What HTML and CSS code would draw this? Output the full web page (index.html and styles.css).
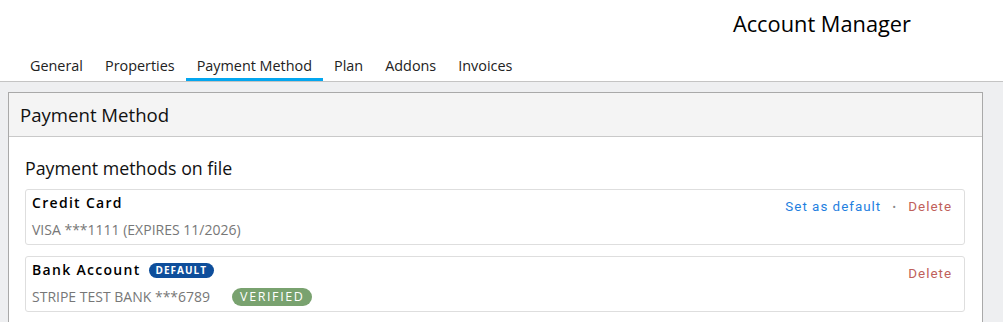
FILE: index.html
```html
<!DOCTYPE html>
<html lang="en">
<head>
    <meta charset="UTF-8">
    <meta name="viewport" content="width=device-width, initial-scale=1.0">
    <title>Account Manager</title>
    <link rel="stylesheet" href="styles.css">
</head>
<body>
    <header class="top">
        <h1>Account Manager</h1>
    </header>
    <nav class="tabs">
        <a href="#">General</a>
        <a href="#">Properties</a>
        <a href="#" class="active">Payment Method</a>
        <a href="#">Plan</a>
        <a href="#">Addons</a>
        <a href="#">Invoices</a>
    </nav>
    <section class="main">
        <div class="panel">
            <div class="panel-head">Payment Method</div>
            <div class="panel-body">
                <h2>Payment methods on file</h2>
                <div class="method">
                    <div class="method-info">
                        <div class="method-title">Credit Card</div>
                        <div class="method-sub">VISA ***1111 (EXPIRES 11/2026)</div>
                    </div>
                    <div class="actions">
                        <a href="#" class="set-default">Set as default</a>
                        <span class="dot">&bull;</span>
                        <a href="#" class="delete">Delete</a>
                    </div>
                </div>
                <div class="method">
                    <div class="method-info">
                        <div class="method-title">Bank Account <span class="badge-default">DEFAULT</span></div>
                        <div class="method-sub">STRIPE TEST BANK ***6789 <span class="badge-verified">VERIFIED</span></div>
                    </div>
                    <div class="actions">
                        <a href="#" class="delete">Delete</a>
                    </div>
                </div>
            </div>
        </div>
    </section>
</body>
</html>
```

FILE: styles.css
```css
body {
    font-family: "Open Sans", "Noto Sans", sans-serif;
    margin: 0;
    padding: 0;
    background-color: #fff;
    color: #111;
    height: 322px;
    overflow: hidden;
}
.top {
    display: flex;
    justify-content: flex-end;
    height: 47px;
    padding-right: 92px;
}
.top h1 {
    margin: 0;
    padding-top: 9px;
    font-size: 21.8px;
    font-weight: 500;
    line-height: 30px;
    color: #000;
}
.tabs {
    display: flex;
    padding-left: 19px;
    border-bottom: 1px solid #c4c4c4;
    height: 34px;
}
.tabs a {
    display: block;
    padding: 0 11px;
    line-height: 37px;
    font-size: 14.4px;
    color: #222;
    text-decoration: none;
    border-bottom: 3px solid transparent;
    box-sizing: border-box;
    height: 34px;
}
.tabs a.active {
    border-bottom-color: #03a6ef;
}
.main {
    background-color: #eeeff1;
    padding: 10px 20px 0 8px;
    height: 240px;
}
.panel {
    border: 1px solid #a9a9a9;
    border-bottom: none;
    background-color: #fff;
    height: 240px;
}
.panel-head {
    background-color: #f4f4f4;
    border-bottom: 1px solid #c9c9c9;
    height: 43px;
    line-height: 43px;
    padding-left: 11px;
    font-size: 18.6px;
    font-weight: 500;
}
.panel-body {
    padding: 19px 17px 0 16px;
}
.panel-body h2 {
    margin: 0 0 9px 0;
    font-size: 17.8px;
    font-weight: 500;
    line-height: 24px;
}
.method {
    display: flex;
    justify-content: space-between;
    border: 1px solid #dedede;
    border-radius: 3px;
    height: 51px;
    padding: 3px 12px 0 6px;
    margin-bottom: 11px;
}
.method-title {
    font-size: 14px;
    font-weight: 600;
    letter-spacing: 1.3px;
    height: 20px;
    line-height: 20px;
    display: flex;
    align-items: center;
    color: #000;
}
.method-sub {
    margin-top: 7px;
    font-size: 14px;
    color: #777;
    line-height: 20px;
    display: flex;
    align-items: center;
}
.badge-default {
    display: inline-block;
    background-color: #0e4e9b;
    color: #fff;
    font-size: 10px;
    font-weight: 700;
    letter-spacing: 1px;
    border-radius: 8px;
    padding: 0 7px;
    line-height: 15px;
    margin-left: 8px;
}
.badge-verified {
    display: inline-block;
    background-color: #79a26f;
    color: #fff;
    font-size: 12.5px;
    letter-spacing: 1.6px;
    border-radius: 9px;
    padding: 0 8px;
    line-height: 18px;
    margin-left: 22px;
}
.actions {
    font-family: Roboto, sans-serif;
    font-size: 13.4px;
    letter-spacing: 1px;
    padding-top: 6px;
}
.actions a {
    text-decoration: none;
}
.set-default {
    color: #1f7fe0;
}
.delete {
    color: #c0605a;
}
.dot {
    color: #888;
    font-size: 10px;
    margin: 0 7px;
}
```
